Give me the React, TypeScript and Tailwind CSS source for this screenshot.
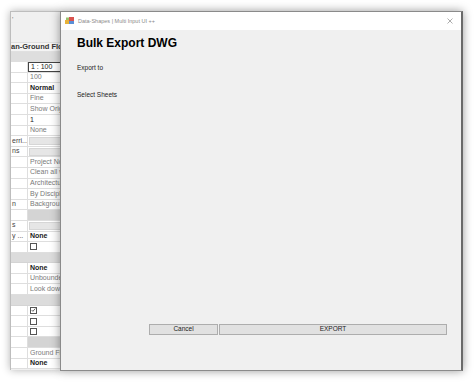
import React from "react";

type Row = {
  label?: string;
  value?: string;
  tone?: "dim" | "dark" | "bold";
  kind?: "text" | "edit" | "btn" | "check" | "checked" | "section" | "readonly";
};

const rows: Row[] = [
  { value: "1 : 100", kind: "edit", tone: "dark" },
  { value: "100", tone: "dim" },
  { value: "Normal", tone: "bold" },
  { value: "Fine", tone: "dim" },
  { value: "Show Orig", tone: "dim" },
  { value: "1", tone: "dark" },
  { value: "None", tone: "dim" },
  { label: "erri...", kind: "btn" },
  { label: "ns", kind: "btn" },
  { value: "Project No", tone: "dim" },
  { value: "Clean all w", tone: "dim" },
  { value: "Architectu", tone: "dim" },
  { value: "By Discipli", tone: "dim" },
  { label: "n", value: "Backgrou", tone: "dim" },
  { kind: "readonly" },
  { label: "s", kind: "btn" },
  { label: "y ...", value: "None", tone: "bold" },
  { kind: "check" },
  { kind: "section" },
  { value: "None", tone: "bold" },
  { value: "Unbounde", tone: "dim" },
  { value: "Look dow", tone: "dim" },
  { kind: "section" },
  { kind: "checked" },
  { kind: "check" },
  { kind: "check" },
  { kind: "readonly" },
  { value: "Ground Fl", tone: "dim" },
  { value: "None", tone: "bold" },
];

function PaletteRow({ row }: { row: Row }) {
  const kind = row.kind ?? "text";
  if (kind === "section") {
    return <div className="h-[10.6px] border-b border-[#d4d4d4] bg-[#dcdcdc]" />;
  }
  const toneClass =
    row.tone === "dim"
      ? "text-[#7a7a7a]"
      : row.tone === "bold"
        ? "font-bold text-[#1a1a1a]"
        : "text-[#1a1a1a]";
  return (
    <div className="flex h-[10.6px] border-b border-[#dedede] bg-white">
      <div className="flex w-[17px] shrink-0 items-center overflow-hidden whitespace-nowrap border-r border-[#dedede] pl-[1px] text-[#444]">
        {row.label}
      </div>
      <div className="flex min-w-0 flex-1 items-center overflow-hidden whitespace-nowrap">
        {kind === "edit" && (
          <div className="flex h-full flex-1 items-center border border-r-0 border-[#444] pl-[2px] text-[#1a1a1a]">
            {row.value}
          </div>
        )}
        {kind === "text" && <span className={`pl-[2px] ${toneClass}`}>{row.value}</span>}
        {kind === "btn" && <div className="ml-[1px] h-[8px] flex-1 border border-r-0 border-[#d6d6d6] bg-[#e6e6e6]" />}
        {kind === "readonly" && <div className="h-full flex-1 bg-[#d4d4d4]" />}
        {(kind === "check" || kind === "checked") && (
          <div className="ml-[2px] flex h-[7px] w-[7px] items-center justify-center border border-[#555] bg-white">
            {kind === "checked" && (
              <svg width="6" height="6" viewBox="0 0 6 6">
                <path d="M0.8 3.1 L2.3 4.6 L5.2 1.2" fill="none" stroke="#333" strokeWidth="0.9" />
              </svg>
            )}
          </div>
        )}
      </div>
    </div>
  );
}

function AppIcon() {
  return (
    <svg width="9" height="8" viewBox="0 0 9 8">
      <rect x="0" y="3" width="4" height="4" fill="#e8b33a" />
      <rect x="4" y="0" width="5" height="4" fill="#d9534f" />
      <rect x="4" y="4" width="5" height="3" fill="#5b8fd6" />
      <rect x="1" y="0.5" width="3" height="2.5" fill="#9ac26b" />
    </svg>
  );
}

export default function App() {
  return (
    <div
      className="flex h-[383px] w-[474px] items-start overflow-hidden bg-white pl-[10px] pt-[11px]"
      style={{ fontFamily: '"Liberation Sans", Arial, sans-serif' }}
    >
      {/* properties palette behind the dialog, visible part only */}
      <div className="flex h-[359px] w-[50px] shrink-0 flex-col overflow-hidden border-l border-t border-[#bdbdbd] bg-[#f0f0f0] text-[7px] shadow-[0_0_8px_rgba(0,0,0,0.3)]">
        <div className="h-[30px] shrink-0 pl-[1px] pt-[3px] text-[7px] text-[#777]">'</div>
        <div className="flex h-[10px] shrink-0 items-center overflow-hidden whitespace-nowrap border-y border-[#e0e0e0] bg-[#f4f4f4] text-[7.5px] font-bold text-[#333]">
          an-Ground Floo
        </div>
        <div className="h-[10px] shrink-0 bg-[#dedede]" />
        <div className="flex flex-col">
          {rows.map((row, i) => (
            <PaletteRow key={i} row={row} />
          ))}
        </div>
      </div>

      {/* dialog */}
      <div className="flex h-[360px] w-[403px] shrink-0 flex-col border border-r-2 border-[#8a8a8a] border-r-[#6a6a6a] bg-[#f0f0f0] shadow-[0_0_9px_rgba(0,0,0,0.4)]">
        <div className="flex h-[18px] shrink-0 items-center bg-white pl-[4px] pr-[8px]">
          <AppIcon />
          <span className="ml-[4px] flex-1 whitespace-nowrap text-[5.5px] text-[#8a8a8a]">
            Data-Shapes | Multi Input UI ++
          </span>
          <svg width="6" height="6" viewBox="0 0 6 6">
            <path d="M0.5 0.5 L5.5 5.5 M5.5 0.5 L0.5 5.5" stroke="#8a8a8a" strokeWidth="0.7" />
          </svg>
        </div>
        <div className="flex flex-1 flex-col pl-[16px]">
          <h1 className="mt-[6px] text-[12px] font-bold leading-[14px] text-black">Bulk Export DWG</h1>
          <div className="mt-[14px] text-[6.5px] leading-[8px] text-[#222]">Export to</div>
          <div className="mt-[19px] text-[6.5px] leading-[8px] text-[#222]">Select Sheets</div>
          <div className="mt-auto mb-[35px] ml-[72px] flex w-[298px] gap-[1px]">
            <button
              type="button"
              className="h-[11px] w-[69px] border border-[#adadad] bg-[#e1e1e1] text-[6.5px] leading-none text-[#222]"
            >
              Cancel
            </button>
            <button
              type="button"
              className="h-[11px] flex-1 border border-[#adadad] bg-[#e1e1e1] text-[6.5px] leading-none text-[#222]"
            >
              EXPORT
            </button>
          </div>
        </div>
      </div>
    </div>
  );
}
